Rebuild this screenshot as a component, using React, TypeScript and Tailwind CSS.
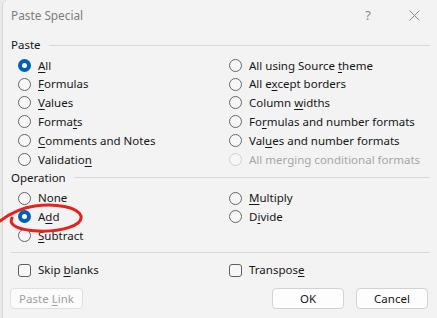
import React from "react";

const F = { fontFamily: '"Noto Sans", "Segoe UI", sans-serif' };

function U({ t, i }: { t: string; i: number }) {
  return (
    <span>
      {t.slice(0, i)}
      <span className="underline underline-offset-2 decoration-1">{t[i]}</span>
      {t.slice(i + 1)}
    </span>
  );
}

function Radio({ checked, disabled }: { checked?: boolean; disabled?: boolean }) {
  if (checked)
    return (
      <span className="w-[13px] h-[13px] rounded-full bg-[#005fb8] flex items-center justify-center shrink-0">
        <span className="w-[5px] h-[5px] rounded-full bg-white" />
      </span>
    );
  return (
    <span
      className={
        "w-[13px] h-[13px] rounded-full border shrink-0 bg-[#f7f7f7] " +
        (disabled ? "border-[#cfcfcf]" : "border-[#666666]")
      }
    />
  );
}

function Row({ t, i, checked, disabled }: { t: string; i: number; checked?: boolean; disabled?: boolean }) {
  return (
    <div className="h-[18.8px] flex items-center gap-[7px]">
      <Radio checked={checked} disabled={disabled} />
      <span className={disabled ? "text-[#a6a6a6]" : "text-[#161616]"}>
        <U t={t} i={i} />
      </span>
    </div>
  );
}

function Check({ t, i }: { t: string; i: number }) {
  return (
    <div className="h-[18px] flex items-center gap-[7px]">
      <span className="w-[13px] h-[13px] rounded-[3px] border border-[#5f5f5f] bg-[#f7f7f7] shrink-0" />
      <span className="text-[#161616]">
        <U t={t} i={i} />
      </span>
    </div>
  );
}

function Group({ label }: { label: string }) {
  return (
    <div className="flex items-center gap-[8px] h-[16px] pl-[10px] pr-[7px]">
      <span className="text-[#161616]">{label}</span>
      <span className="flex-1 h-px bg-[#d9d9d9]" />
    </div>
  );
}

export default function App() {
  return (
    <div className="w-[437px] h-[318px] bg-[#e9e9e9] overflow-hidden relative" style={F}>
      <div className="absolute left-[2px] top-0 right-0 bottom-0 bg-[#f3f3f3] border-l border-[#d6d6d6] rounded-tl-[6px] text-[11.5px] leading-none flex flex-col">
        <div className="h-[31px] flex items-center pl-[8px] pr-[14px] shrink-0">
          <span className="text-[11.8px] text-[#7d7d7d] flex-1">Paste Special</span>
          <span className="text-[13px] text-[#8a8a8a] mr-[38px]">?</span>
          <svg width="11" height="11" viewBox="0 0 11 11" className="mr-[3px]">
            <path d="M0.5 0.5 L10.5 10.5 M10.5 0.5 L0.5 10.5" stroke="#8a8a8a" strokeWidth="1" />
          </svg>
        </div>
        <div className="-ml-[2px] mt-[6px]">
          <Group label="Paste" />
        </div>
        <div className="grid grid-cols-[211px_1fr] mt-[3px] pl-[15px]">
          <div className="flex flex-col">
            <Row t="All" i={0} checked />
            <Row t="Formulas" i={0} />
            <Row t="Values" i={0} />
            <Row t="Formats" i={5} />
            <Row t="Comments and Notes" i={0} />
            <Row t="Validation" i={9} />
          </div>
          <div className="flex flex-col">
            <Row t="All using Source theme" i={17} />
            <Row t="All except borders" i={5} />
            <Row t="Column widths" i={7} />
            <Row t="Formulas and number formats" i={2} />
            <Row t="Values and number formats" i={3} />
            <Row t="All merging conditional formats" i={7} disabled />
          </div>
        </div>
        <div className="-ml-[2px] mt-[1px]">
          <Group label="Operation" />
        </div>
        <div className="grid grid-cols-[211px_1fr] mt-[3px] pl-[15px]">
          <div className="flex flex-col">
            <Row t="None" i={1} />
            <Row t="Add" i={1} checked />
            <Row t="Subtract" i={0} />
          </div>
          <div className="flex flex-col">
            <Row t="Multiply" i={0} />
            <Row t="Divide" i={1} />
          </div>
        </div>
        <div className="h-px bg-[#d9d9d9] ml-[8px] mr-[7px] mt-[7px]" />
        <div className="grid grid-cols-[211px_1fr] mt-[8px] pl-[15px]">
          <Check t="Skip blanks" i={5} />
          <Check t="Transpose" i={8} />
        </div>
        <div className="flex items-center mt-[9px] pl-[7px] pr-[9px]">
          <button className="w-[73px] h-[21px] rounded-[4px] border border-[#e0e0e0] bg-[#fbfbfb] text-[#a0a0a0] text-[11.5px] leading-none">
            Paste <U t="Link" i={0} />
          </button>
          <div className="flex-1" />
          <button className="w-[72px] h-[21px] rounded-[4px] border border-[#d2d2d2] bg-[#fdfdfd] text-[#161616] text-[11.5px] leading-none">
            OK
          </button>
          <button className="w-[72px] h-[21px] ml-[12px] rounded-[4px] border border-[#d2d2d2] bg-[#fdfdfd] text-[#161616] text-[11.5px] leading-none">
            Cancel
          </button>
        </div>
      </div>
      <svg className="absolute left-0 top-0 pointer-events-none" width="437" height="318" viewBox="0 0 437 318">
        <path
          d="M0 221 C 8 215, 20 208, 35 206 C 55 203, 78 207, 81 216 C 83 226, 60 232, 38 231 C 20 230, 8 226, 12 218"
          fill="none"
          stroke="#e3241d"
          strokeWidth="3"
          strokeLinecap="round"
        />
      </svg>
    </div>
  );
}
